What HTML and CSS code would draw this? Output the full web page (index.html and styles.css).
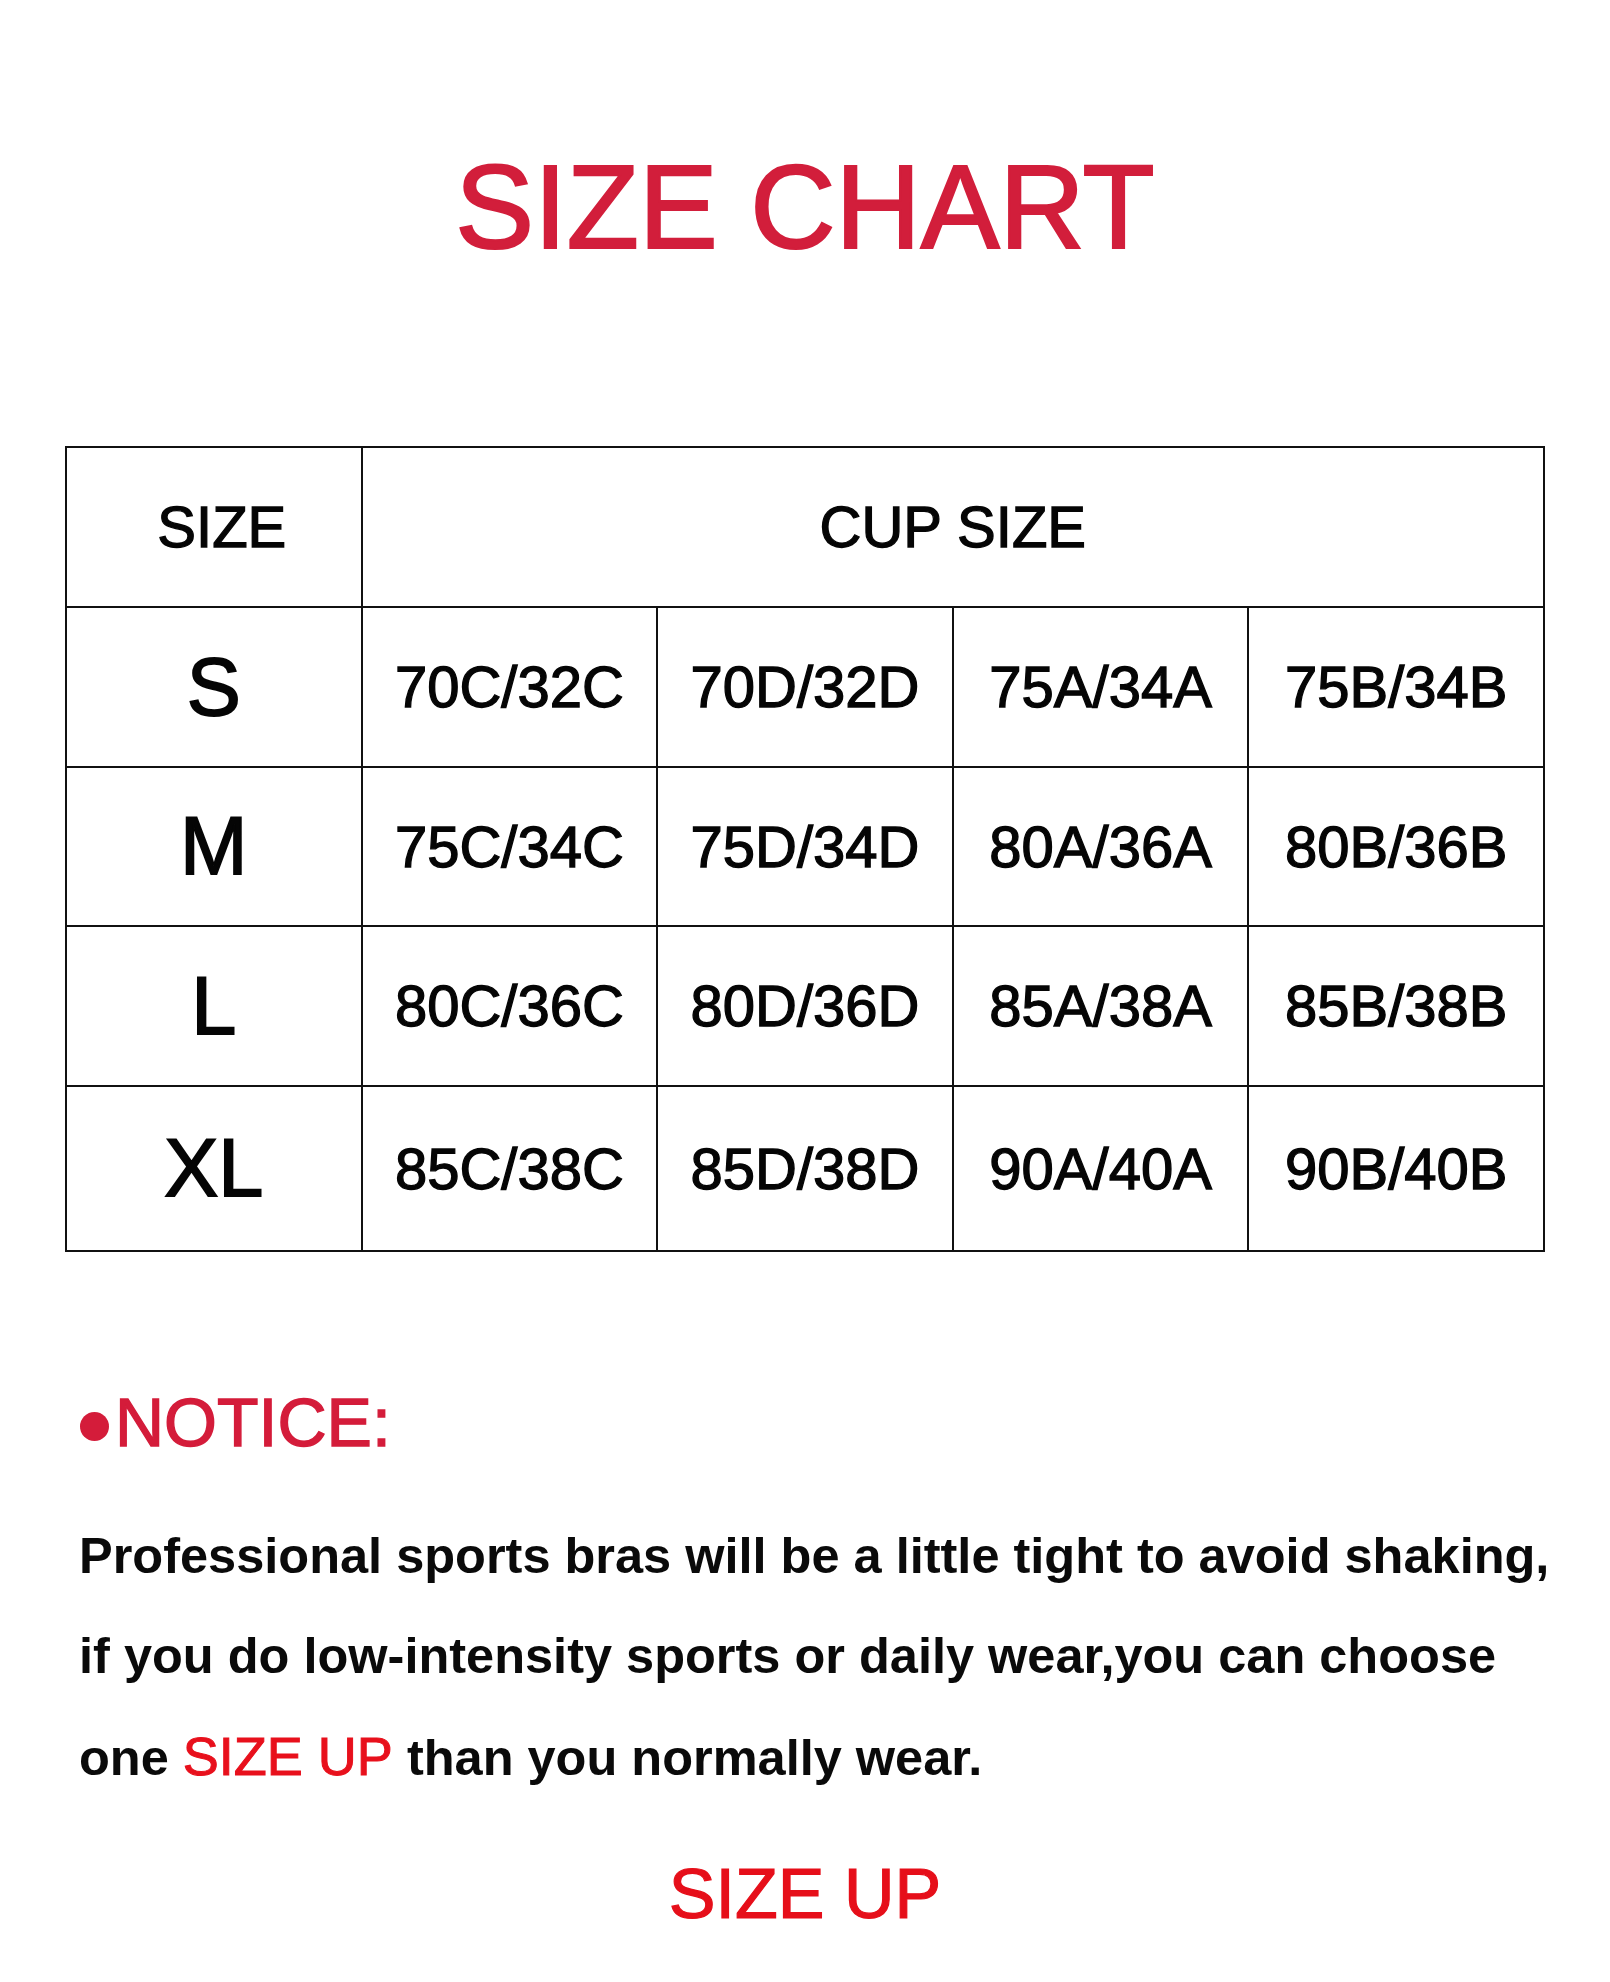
FILE: index.html
```html
<!DOCTYPE html>
<html lang="en">
<head>
<meta charset="utf-8">
<title>Size Chart</title>
<link rel="stylesheet" href="styles.css">
</head>
<body>
<main class="page">
  <h1 class="title">SIZE CHART</h1>

  <div class="chart">
    <div class="cell head first">SIZE</div>
    <div class="cell head span4">CUP SIZE</div>

    <div class="cell label">S</div>
    <div class="cell">70C/32C</div>
    <div class="cell">70D/32D</div>
    <div class="cell">75A/34A</div>
    <div class="cell">75B/34B</div>

    <div class="cell label">M</div>
    <div class="cell">75C/34C</div>
    <div class="cell">75D/34D</div>
    <div class="cell">80A/36A</div>
    <div class="cell">80B/36B</div>

    <div class="cell label">L</div>
    <div class="cell">80C/36C</div>
    <div class="cell">80D/36D</div>
    <div class="cell">85A/38A</div>
    <div class="cell">85B/38B</div>

    <div class="cell label">XL</div>
    <div class="cell">85C/38C</div>
    <div class="cell">85D/38D</div>
    <div class="cell">90A/40A</div>
    <div class="cell">90B/40B</div>
  </div>

  <h2 class="notice"><span class="dot"></span>NOTICE:</h2>

  <p class="note">Professional sports bras will be a little tight to avoid shaking,<br>if you do low-intensity sports or daily wear,you can choose<br>one <span class="hl">SIZE UP</span> than you normally wear.</p>

  <div class="sizeup">SIZE UP</div>
</main>
</body>
</html>
```

FILE: styles.css
```css
* { box-sizing: border-box; }

html, body {
  margin: 0;
  padding: 0;
  background: #ffffff;
}

body {
  font-family: "Liberation Sans", Arial, "Helvetica Neue", sans-serif;
  color: #000;
  width: 1610px;
  height: 1982px;
  overflow: hidden;
}

.page {
  padding-top: 139px;
}

.title {
  margin: 0;
  font-size: 118px;
  line-height: 136px;
  font-weight: 400;
  color: #d21e3b;
  text-align: center;
  -webkit-text-stroke: 2.2px #d21e3b;
}

.chart {
  margin: 171px 0 0 65px;
  width: 1480px;
  display: grid;
  grid-template-columns: repeat(5, 1fr);
  grid-template-rows: 160px 160px 159px 160px 165px;
  border-top: 2px solid #111;
  border-left: 2px solid #111;
}

.cell {
  border-right: 2px solid #111;
  border-bottom: 2px solid #111;
  display: flex;
  align-items: center;
  justify-content: center;
  font-size: 58px;
  line-height: 1;
  color: #050505;
  -webkit-text-stroke: 1.3px #050505;
}

.span4 {
  grid-column: span 4;
}

.head {
  font-size: 58px;
}

.first {
  padding-left: 16px;
}

.label {
  font-size: 81px;
  -webkit-text-stroke: 1.8px #050505;
}

.notice {
  margin: 130px 0 0 80px;
  display: flex;
  align-items: center;
  font-size: 68px;
  line-height: 80px;
  font-weight: 400;
  color: #d41c3a;
  -webkit-text-stroke: 1.4px #d41c3a;
}

.dot {
  display: inline-block;
  width: 29px;
  height: 29px;
  border-radius: 50%;
  background: #d41c3a;
  margin: 8px 6px 0 0;
}

.note {
  margin: 44px 0 0 79px;
  font-size: 50.5px;
  line-height: 100px;
  font-weight: 700;
  white-space: nowrap;
  color: #0a0a0a;
}

.hl {
  color: #e8101c;
  font-size: 54px;
  font-weight: 400;
  -webkit-text-stroke: 1px #e8101c;
}

.sizeup {
  margin-top: 46px;
  text-align: center;
  font-size: 70px;
  line-height: 80px;
  color: #e60f1a;
  -webkit-text-stroke: 1.2px #e60f1a;
}
```
